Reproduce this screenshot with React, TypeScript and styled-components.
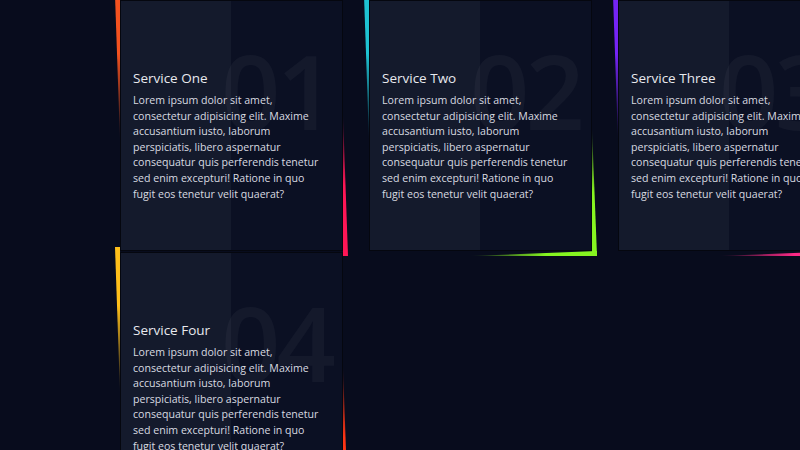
import React from "react";
import styled, { createGlobalStyle } from "styled-components";

const Global = createGlobalStyle`
  html, body { margin: 0; padding: 0; background: #080c1d; overflow: hidden; }
  body { font-family: "Open Sans", "DejaVu Sans", sans-serif; }
`;

const Page = styled.div`
  width: 800px;
  height: 450px;
  overflow: hidden;
  background: #080c1d;
`;

const Grid = styled.div`
  display: grid;
  grid-template-columns: repeat(3, 223px);
  column-gap: 26px;
  row-gap: 1px;
  padding-left: 120px;
`;

const Card = styled.div`
  position: relative;
  height: 251px;
  box-sizing: border-box;
  border: 1px solid #05070f;
  background: linear-gradient(to right, #141a2c 0 50%, #0b1023 50% 100%);
  padding: 67px 13px 0 12px;
`;

const Number = styled.div`
  position: absolute;
  top: 37px;
  right: 10px;
  font-family: "Open Sans", sans-serif;
  font-size: 104px;
  font-weight: 600;
  line-height: 1;
  color: rgba(255, 255, 255, 0.04);
  letter-spacing: -4px;
  pointer-events: none;
`;

const Title = styled.h3`
  position: relative;
  margin: 0;
  font-size: 13.5px;
  font-weight: 400;
  line-height: 20px;
  color: #e8e9ee;
`;

const Text = styled.p`
  position: relative;
  margin: 5px 0 0;
  font-size: 10.6px;
  font-weight: 500;
  line-height: 15.6px;
  color: #d8dae0;
`;

type Edge = "left" | "right" | "bottom";

const Wedge = styled.span<{ $edge: Edge; $color: string; $len: number }>`
  position: absolute;
  ${(p) =>
    p.$edge === "left"
      ? `left: -6px; top: -6px; width: 5px; height: ${p.$len}px;
         clip-path: polygon(0 0, 100% 0, 100% 100%);
         background: linear-gradient(to bottom, ${p.$color} 0%, ${p.$color} 40%, transparent 100%);`
      : p.$edge === "right"
      ? `right: -6px; bottom: -6px; width: 5px; height: ${p.$len}px;
         clip-path: polygon(0 0, 100% 100%, 0 100%);
         background: linear-gradient(to top, ${p.$color} 0%, ${p.$color} 50%, transparent 100%);`
      : `right: -6px; bottom: -6px; height: 5px; width: ${p.$len}px;
         clip-path: polygon(0 100%, 100% 0, 100% 100%);
         background: linear-gradient(to left, ${p.$color} 0%, ${p.$color} 40%, transparent 100%);`}
`;

const lorem =
  "Lorem ipsum dolor sit amet, consectetur adipisicing elit. Maxime accusantium iusto, laborum perspiciatis, libero aspernatur consequatur quis perferendis tenetur sed enim excepturi! Ratione in quo fugit eos tenetur velit quaerat?";

const cards = [
  {
    n: "01",
    title: "Service One",
    wedges: [
      { edge: "left" as Edge, color: "#f4521f", len: 146 },
      { edge: "right" as Edge, color: "#ff1656", len: 142 },
    ],
  },
  {
    n: "02",
    title: "Service Two",
    wedges: [
      { edge: "left" as Edge, color: "#1ec3d2", len: 146 },
      { edge: "right" as Edge, color: "#86f520", len: 128 },
      { edge: "bottom" as Edge, color: "#86f520", len: 128 },
    ],
  },
  {
    n: "03",
    title: "Service Three",
    wedges: [
      { edge: "left" as Edge, color: "#7524f5", len: 146 },
      { edge: "right" as Edge, color: "#ff2a86", len: 128 },
      { edge: "bottom" as Edge, color: "#ff2a86", len: 128 },
    ],
  },
  {
    n: "04",
    title: "Service Four",
    wedges: [
      { edge: "left" as Edge, color: "#ffbf1a", len: 146 },
      { edge: "right" as Edge, color: "#ff3414", len: 142 },
    ],
  },
];

export default function App() {
  return (
    <Page>
      <Global />
      <Grid>
        {cards.map((c) => (
          <Card key={c.n}>
            {c.wedges.map((w, i) => (
              <Wedge key={i} $edge={w.edge} $color={w.color} $len={w.len} />
            ))}
            <Number>{c.n}</Number>
            <Title>{c.title}</Title>
            <Text>{lorem}</Text>
          </Card>
        ))}
      </Grid>
    </Page>
  );
}
